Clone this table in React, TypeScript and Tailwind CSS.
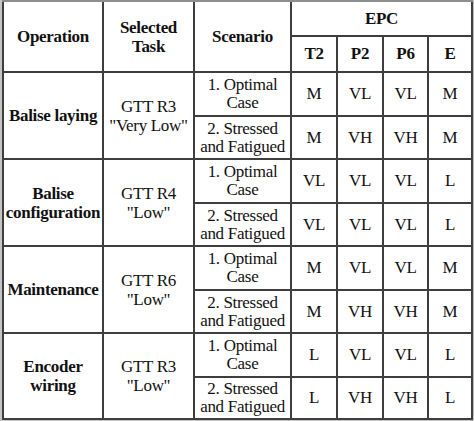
import React from 'react';

type Row = {
  op: React.ReactNode;
  task: React.ReactNode;
  optimal: string[];
  stressed: string[];
};

const rows: Row[] = [
  {
    op: 'Balise laying',
    task: (
      <>
        GTT R3
        <br />
        "Very Low"
      </>
    ),
    optimal: ['M', 'VL', 'VL', 'M'],
    stressed: ['M', 'VH', 'VH', 'M'],
  },
  {
    op: (
      <>
        Balise
        <br />
        configuration
      </>
    ),
    task: (
      <>
        GTT R4
        <br />
        "Low"
      </>
    ),
    optimal: ['VL', 'VL', 'VL', 'L'],
    stressed: ['VL', 'VL', 'VL', 'L'],
  },
  {
    op: 'Maintenance',
    task: (
      <>
        GTT R6
        <br />
        "Low"
      </>
    ),
    optimal: ['M', 'VL', 'VL', 'M'],
    stressed: ['M', 'VH', 'VH', 'M'],
  },
  {
    op: (
      <>
        Encoder
        <br />
        wiring
      </>
    ),
    task: (
      <>
        GTT R3
        <br />
        "Low"
      </>
    ),
    optimal: ['L', 'VL', 'VL', 'L'],
    stressed: ['L', 'VH', 'VH', 'L'],
  },
];

function Cell({ className = '', children }: { className?: string; children: React.ReactNode }) {
  return (
    <div className={`flex items-center justify-center bg-white text-center ${className}`}>
      {children}
    </div>
  );
}

export default function App() {
  return (
    <div
      className="h-[421px] w-[474px] overflow-hidden bg-[#c4c4c4] pl-[2px] text-[17px] tracking-[-0.3px] text-[#111]"
      style={{ fontFamily: '"Liberation Serif", "Times New Roman", serif' }}
    >
      <div className="grid w-[471px] grid-cols-[98px_89px_95px_44px_44px_43px_42px] grid-rows-[33px_34px_42px_41px_42px_41px_42px_41px_42px_40px] gap-[2px] border-t-2 border-[#8e8e8e] bg-[#3e3e3e] px-[2px] pb-[2px]">
        {/* header */}
        <Cell className="row-span-2 font-bold">Operation</Cell>
        <Cell className="row-span-2 font-bold leading-[19px]">
          Selected
          <br />
          Task
        </Cell>
        <Cell className="row-span-2 font-bold">Scenario</Cell>
        <Cell className="col-span-4 font-bold">EPC</Cell>
        <Cell className="font-bold">T2</Cell>
        <Cell className="font-bold">P2</Cell>
        <Cell className="font-bold">P6</Cell>
        <Cell className="font-bold">E</Cell>

        {rows.map((r, i) => (
          <React.Fragment key={i}>
            <Cell className="row-span-2 font-bold leading-[19px]">{r.op}</Cell>
            <Cell className="row-span-2 leading-[19px]">{r.task}</Cell>
            <Cell className="leading-[18px]">
              1. Optimal
              <br />
              Case
            </Cell>
            {r.optimal.map((v, j) => (
              <Cell key={`o${j}`}>{v}</Cell>
            ))}
            <Cell className="leading-[18px]">
              2. Stressed
              <br />
              and Fatigued
            </Cell>
            {r.stressed.map((v, j) => (
              <Cell key={`s${j}`}>{v}</Cell>
            ))}
          </React.Fragment>
        ))}
      </div>
    </div>
  );
}
